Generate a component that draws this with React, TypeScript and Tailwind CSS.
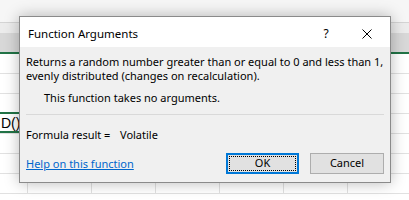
import React from 'react';

const font = { fontFamily: '"Segoe UI", "Noto Sans", "Liberation Sans", sans-serif' };

const rows = [0, 1, 2, 3, 4, 5, 6];
const cols = [0, 1, 2, 3, 4, 5, 6];

const SheetBackground: React.FC = () => (
  <div className="flex flex-col w-[409px] h-[200px] bg-white">
    <div className="h-[23px] bg-[#f6f6f6] border-b border-[#d4d4d4]" />
    <div className="h-[10px] bg-[#ececec]" />
    <div className="h-[19px] bg-[#d8d8d8]" />
    <div className="h-[2px] bg-[#217346]" />
    <div className="flex flex-col">
      {rows.map((r) => (
        <div key={r} className="flex h-[20px] border-b border-[#e1e1e1]">
          <div className="w-[28px] shrink-0 border-r border-[#e1e1e1]" />
          {cols.map((c) => (
            <div key={c} className="w-[64px] shrink-0 border-r border-[#e1e1e1]" />
          ))}
        </div>
      ))}
    </div>
  </div>
);

const App: React.FC = () => {
  return (
    <div className="relative w-[409px] h-[200px] overflow-hidden" style={font}>
      <SheetBackground />

      {/* cell being edited, peeking out left of the dialog */}
      <div className="absolute left-0 top-[112px] w-[30px] h-[21px] border-y-2 border-[#217346] bg-white flex items-center">
        <span className="text-[14px] leading-none pl-[1px] text-black" style={{ fontFamily: '"Liberation Sans", sans-serif' }}>
          D()
        </span>
      </div>

      <div className="absolute left-[19px] top-[16px] w-[372px] h-[167px] border border-[#8a8a8a] bg-[#f0f0f0] shadow-[0_0_14px_rgba(0,0,0,0.28)] flex flex-col text-[11px] text-black whitespace-nowrap">
        <div className="h-[30px] bg-white flex items-center pl-[8px] pt-[3px]">
          <span className="flex-1 text-[11.5px]">Function Arguments</span>
          <span className="w-[20px] text-center text-[12px] mr-[26px]">?</span>
          <svg width="10" height="10" viewBox="0 0 10 10" className="mr-[18px]">
            <path d="M0.5 0.5 L9.5 9.5 M9.5 0.5 L0.5 9.5" stroke="#000" strokeWidth="1" />
          </svg>
        </div>

        <div className="flex flex-col flex-1 px-[6px] pt-[8px] pb-[8px]">
          <p className="leading-[14px]">
            Returns a random number greater than or equal to 0 and less than 1,
            <br />
            evenly distributed (changes on recalculation).
          </p>
          <p className="mt-[8px] pl-[18px] leading-[13px]">This function takes no arguments.</p>
          <div className="mt-[10px] h-px bg-[#d9d9d9]" />
          <div className="mt-[13px] flex leading-[13px]">
            <span className="w-[94px] shrink-0">Formula result =</span>
            <span>Volatile</span>
          </div>
          <div className="mt-auto flex items-center">
            <a className="flex-1 text-[#0066cc] underline leading-[13px]">Help on this function</a>
            <button className="w-[73px] h-[21px] border-2 border-[#0078d7] bg-[#e1e1e1] p-[1px] flex">
              <span className="flex-1 border border-dotted border-black flex items-center justify-center">
                OK
              </span>
            </button>
            <button className="ml-[11px] w-[74px] h-[21px] border border-[#adadad] bg-[#e1e1e1] flex items-center justify-center">
              Cancel
            </button>
          </div>
        </div>
      </div>
    </div>
  );
};

export default App;
